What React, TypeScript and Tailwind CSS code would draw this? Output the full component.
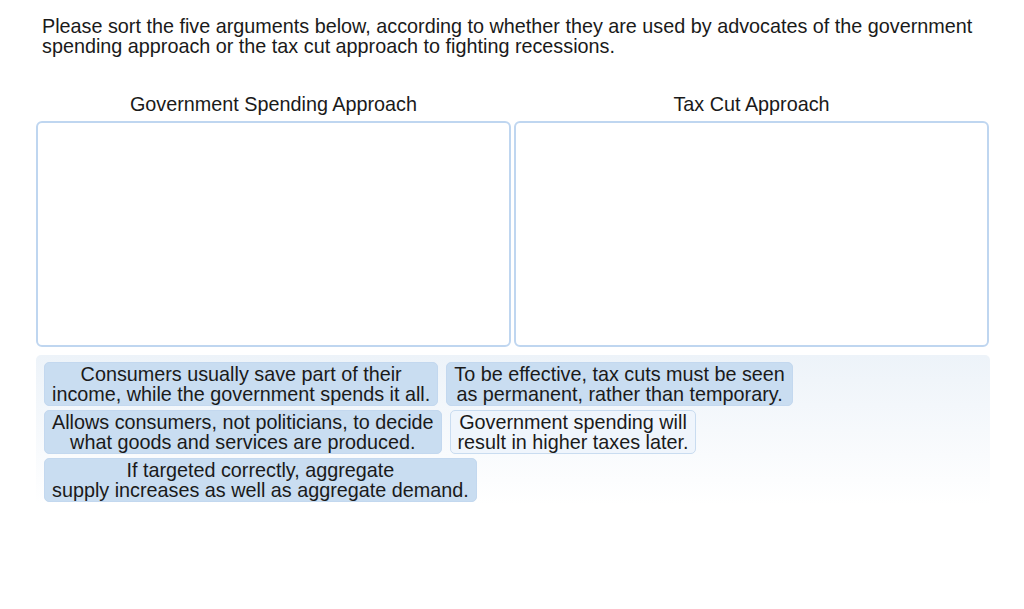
import React from 'react';

const CARDS = [
  { id: 'save', lines: ['Consumers usually save part of their', 'income, while the government spends it all.'] },
  { id: 'permanent', lines: ['To be effective, tax cuts must be seen', 'as permanent, rather than temporary.'] },
  { id: 'decide', lines: ['Allows consumers, not politicians, to decide', 'what goods and services are produced.'] },
  { id: 'taxes', lines: ['Government spending will', 'result in higher taxes later.'], light: true },
  { id: 'supply', lines: ['If targeted correctly, aggregate', 'supply increases as well as aggregate demand.'] },
];

const Card = ({ lines, light }: { lines: string[]; light?: boolean }) => (
  <div
    className={`rounded-[5px] border px-[7px] py-[1px] text-center text-[19.8px] leading-[20px] text-[#1a1a1a] ${
      light ? 'bg-[#eff5fc] border-[#c9dcf0]' : 'bg-[#c9ddf1] border-[#c3d8ef]'
    }`}
  >
    {lines.map(l => (
      <div key={l}>{l}</div>
    ))}
  </div>
);

export default function App() {
  return (
    <div className="w-[1024px] h-[609px] bg-white font-['Liberation_Sans',Arial,sans-serif] text-[#1a1a1a]">
      <div className="px-[42px] pt-[16px] text-[19.8px] leading-[20px] whitespace-nowrap">
        Please sort the five arguments below, according to whether they are used by advocates of the government
        <br />
        spending approach or the tax cut approach to fighting recessions.
      </div>

      <div className="mx-[36px] mt-[38px] w-[953px] grid grid-cols-2 gap-x-[3px]">
        <div className="text-center text-[19.8px] leading-[20px] mb-[7px]">Government Spending Approach</div>
        <div className="text-center text-[19.8px] leading-[20px] mb-[7px]">Tax Cut Approach</div>
        <div className="h-[226px] rounded-[6px] border-2 border-[#bfd6f0]" />
        <div className="h-[226px] rounded-[6px] border-2 border-[#bfd6f0]" />
      </div>

      <div className="mx-[36px] mt-[8px] w-[954px] h-[150px] rounded-[5px] bg-gradient-to-b from-[#edf3f9] to-white px-[8px] pt-[7px]">
        <div className="flex flex-wrap gap-x-[8px] gap-y-[4px]">
          {CARDS.map(c => (
            <Card key={c.id} lines={c.lines} light={c.light} />
          ))}
        </div>
      </div>
    </div>
  );
}
